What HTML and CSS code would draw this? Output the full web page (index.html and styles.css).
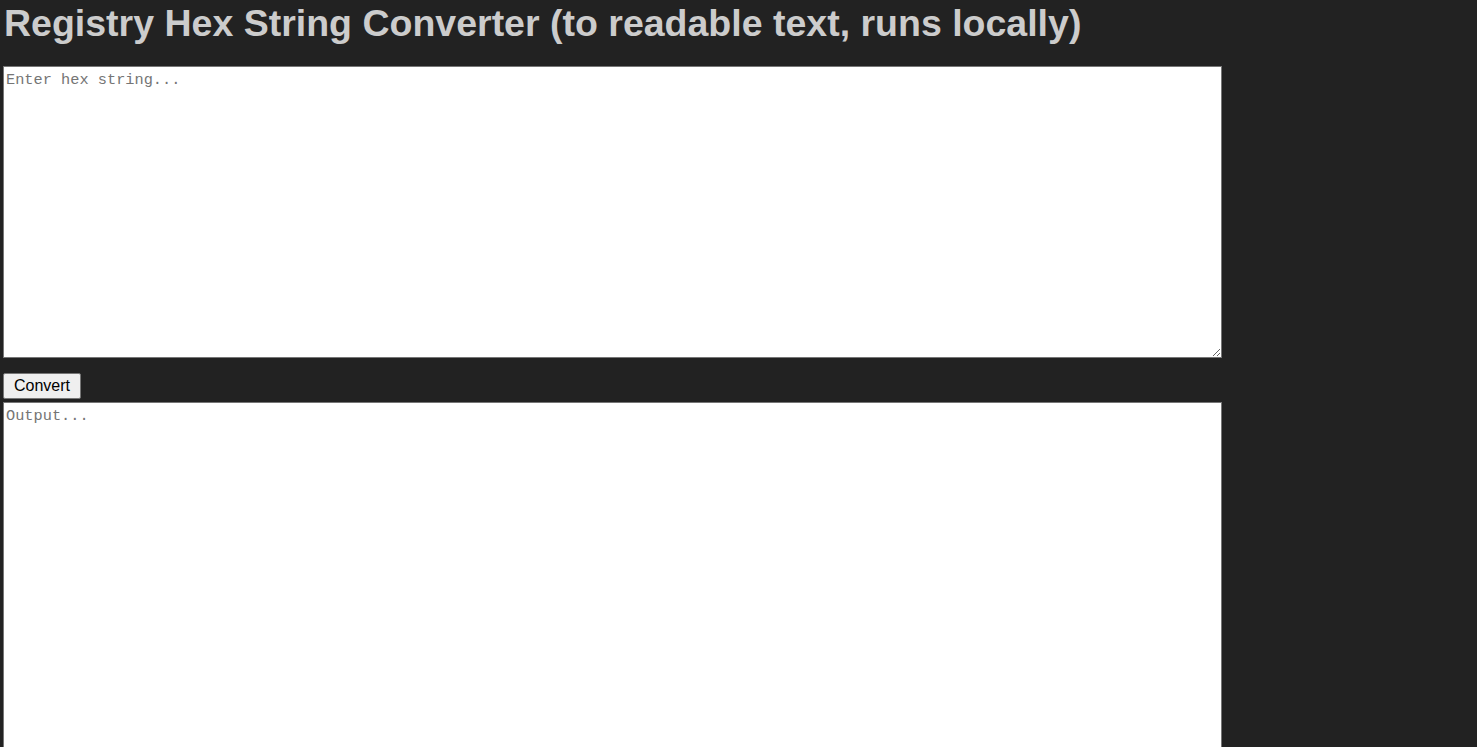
FILE: index.html
```html
<!DOCTYPE html>
<html lang="en">
<head>
    <meta charset="UTF-8">
    <meta name="viewport" content="width=device-width, initial-scale=1.0">
    <title>Registry Hex String Converter</title>
    <link rel="stylesheet" href="styles.css">
</head>
<body>
    <h1>Registry Hex String Converter (to readable text, runs locally)</h1>
    <div class="tool">
        <textarea id="hexInput" class="box input-box" placeholder="Enter hex string..."></textarea>
        <button type="button" class="convert">Convert</button>
        <textarea id="output" class="box output-box" placeholder="Output..." readonly></textarea>
    </div>
</body>
</html>
```
FILE: styles.css
```css
body {
    margin: 0;
    padding: 3px;
    background-color: #222;
    color: #ccc;
    font-family: "Liberation Sans", Arial, sans-serif;
}
h1 {
    font-size: 37.5px;
    margin: 0 0 22px 1px;
    line-height: 41px;
}
.tool {
    display: flex;
    flex-direction: column;
    align-items: flex-start;
}
.box {
    box-sizing: border-box;
    width: 1219px;
    border: 1px solid #767676;
    padding: 4px 2px 2px;
    margin: 0;
    font-family: "Liberation Mono", "DejaVu Sans Mono", monospace;
    font-size: 15.3px;
    background: #fff;
    color: #000;
}
.box::placeholder {
    color: #757575;
}
.input-box {
    height: 292px;
}
.output-box {
    height: 420px;
    resize: none;
}
.convert {
    margin: 15px 0 3px;
    padding: 3px 10px;
    font-family: "Liberation Sans", Arial, sans-serif;
    font-size: 16px;
    line-height: 18px;
    background: #efefef;
    border: 1px solid #767676;
    border-radius: 2px;
    color: #000;
}
```
